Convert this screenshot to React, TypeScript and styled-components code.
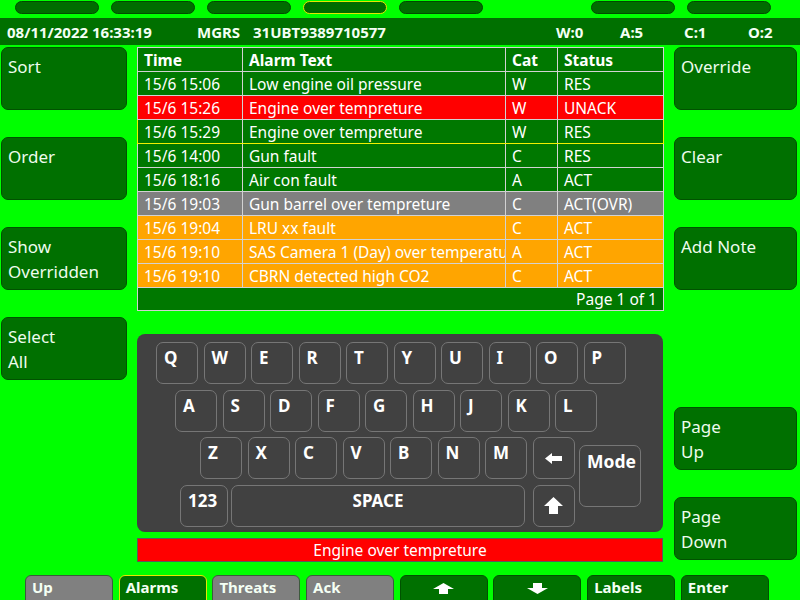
import React from 'react';
import styled, { createGlobalStyle } from 'styled-components';

const GlobalStyle = createGlobalStyle`
  html, body {
    margin: 0;
    padding: 0;
    background: #00ff00;
  }
  body {
    font-family: "Noto Sans", "Open Sans", sans-serif;
    width: 800px;
    height: 600px;
    overflow: hidden;
  }
`;

const Screen = styled.div`
  width: 800px;
  height: 600px;
  overflow: hidden;
  display: flex;
  flex-direction: column;
  & > * {
    flex: none;
  }
`;

const TopTabs = styled.div`
  display: flex;
  gap: 12px;
  padding: 1px 0 0 15px;
  height: 14px;
`;

const TopTab = styled.div<{ $active?: boolean; $empty?: boolean }>`
  width: 84px;
  height: 13px;
  box-sizing: border-box;
  border-radius: 7px;
  background: #006c00;
  border: 1px solid ${(p) => (p.$active ? '#e6e600' : '#004a00')};
  visibility: ${(p) => (p.$empty ? 'hidden' : 'visible')};
`;

const StatusBar = styled.div`
  margin-top: 3px;
  height: 27px;
  background: #007000;
  display: flex;
  align-items: center;
  padding-left: 7px;
  color: #f4fff4;
  font-weight: 700;
  font-size: 15px;
  white-space: nowrap;
  overflow: hidden;
`;

const StatusField = styled.span<{ $w?: number }>`
  width: ${(p) => (p.$w ? `${p.$w}px` : 'auto')};
  flex: ${(p) => (p.$w ? 'none' : '1')};
`;

const Main = styled.div`
  margin-top: 2px;
  height: 528px;
  display: grid;
  grid-template-columns: 126px 526px 124px;
  column-gap: 10px;
  padding-left: 1px;
  box-sizing: border-box;
`;

const SideColumn = styled.div<{ $shift?: number }>`
  display: flex;
  flex-direction: column;
  gap: 27px;
  margin-left: ${(p) => p.$shift ?? 0}px;
`;

const SideButton = styled.div<{ $empty?: boolean }>`
  height: 63px;
  flex: none;
  box-sizing: border-box;
  background: #007000;
  border: 1px solid #005200;
  border-radius: 7px;
  color: #eefcee;
  font-size: 17px;
  line-height: 25px;
  padding: 6px 6px;
  visibility: ${(p) => (p.$empty ? 'hidden' : 'visible')};
`;

const Center = styled.div`
  display: flex;
  flex-direction: column;
  & > * {
    flex: none;
  }
`;

const AlarmTable = styled.table`
  width: 526px;
  table-layout: fixed;
  border-collapse: collapse;
  color: #ffffff;
  font-size: 15.5px;
`;

const HeadCell = styled.th`
  text-align: left;
  font-weight: 700;
  background: #007800;
  border: 1px solid #d2d2d2;
  padding: 0 6px;
  height: 23px;
`;

const rowColors: Record<string, string> = {
  green: '#007800',
  red: '#ff0000',
  grey: '#808080',
  orange: '#ffa500',
};

const Row = styled.tr<{ $tone: string; $focus?: boolean }>`
  background: ${(p) => rowColors[p.$tone]};
  td {
    border-top-color: ${(p) => (p.$focus ? '#f0f000' : '#d2d2d2')};
    border-bottom-color: ${(p) => (p.$focus ? '#f0f000' : '#d2d2d2')};
  }
  td:first-child {
    border-left-color: ${(p) => (p.$focus ? '#f0f000' : '#d2d2d2')};
  }
  td:last-child {
    border-right-color: ${(p) => (p.$focus ? '#f0f000' : '#d2d2d2')};
  }
`;

const Cell = styled.td`
  border: 1px solid #d2d2d2;
  padding: 0 6px;
  height: 23px;
  white-space: nowrap;
  overflow: hidden;
  text-overflow: clip;
`;

const FooterCell = styled.td`
  border: 1px solid #d2d2d2;
  background: #007800;
  text-align: right;
  padding: 0 6px;
  height: 22px;
`;

const Keyboard = styled.div`
  margin-top: 23px;
  height: 198px;
  box-sizing: border-box;
  background: #414141;
  border-radius: 8px;
  padding: 8px 0 0 19px;
`;

const KeyRow = styled.div<{ $indent?: number }>`
  display: flex;
  gap: 5.5px;
  margin-left: ${(p) => p.$indent ?? 0}px;
  margin-bottom: 5.5px;
`;

const Key = styled.div<{ $w?: number; $h?: number; $center?: boolean }>`
  width: ${(p) => p.$w ?? 42}px;
  height: ${(p) => p.$h ?? 42}px;
  flex: none;
  box-sizing: border-box;
  border: 1.5px solid #767676;
  border-radius: 7px;
  color: #ffffff;
  font-weight: 700;
  font-size: 17px;
  line-height: 20px;
  padding: 5px 0 0 7px;
  text-align: ${(p) => (p.$center ? 'center' : 'left')};
  ${(p) => p.$center && 'padding-left: 0;'}
`;

const IconKey = styled(Key)`
  display: flex;
  align-items: center;
  justify-content: center;
  padding: 0;
`;

const LowerKeys = styled.div`
  display: flex;
  margin-left: 24px;
`;

const LowerRows = styled.div`
  display: flex;
  flex-direction: column;
`;

const ModeKey = styled(Key)`
  margin: 8px 0 0 4.5px;
  font-size: 17.5px;
  padding-top: 5px;
`;

const MessageBar = styled.div`
  margin-top: 6px;
  height: 24px;
  box-sizing: border-box;
  background: #ff0000;
  border: 1px solid #5a5a5a;
  color: #ffffff;
  font-size: 15.5px;
  line-height: 22px;
  text-align: center;
`;

const BottomBar = styled.div`
  display: flex;
  gap: 5.7px;
  padding-left: 25px;
`;

const BottomButton = styled.div<{ $tone: 'grey' | 'green'; $active?: boolean }>`
  width: 88px;
  height: 32px;
  flex: none;
  box-sizing: border-box;
  border-radius: 6px;
  background: ${(p) => (p.$tone === 'grey' ? '#808080' : '#007000')};
  border: 1px solid ${(p) => (p.$active ? '#e6e600' : p.$tone === 'grey' ? '#3c5a3c' : '#005200')};
  color: #f4fff4;
  font-weight: 700;
  font-size: 15px;
  line-height: 20px;
  padding: 1px 6px;
`;

const ArrowButton = styled(BottomButton)`
  display: flex;
  justify-content: center;
  padding: 7px 0 0;
`;

const alarms = [
  { time: '15/6 15:06', text: 'Low engine oil pressure', cat: 'W', status: 'RES', tone: 'green' },
  { time: '15/6 15:26', text: 'Engine over tempreture', cat: 'W', status: 'UNACK', tone: 'red' },
  { time: '15/6 15:29', text: 'Engine over tempreture', cat: 'W', status: 'RES', tone: 'green', focus: true },
  { time: '15/6 14:00', text: 'Gun fault', cat: 'C', status: 'RES', tone: 'green' },
  { time: '15/6 18:16', text: 'Air con fault', cat: 'A', status: 'ACT', tone: 'green' },
  { time: '15/6 19:03', text: 'Gun barrel over tempreture', cat: 'C', status: 'ACT(OVR)', tone: 'grey' },
  { time: '15/6 19:04', text: 'LRU xx fault', cat: 'C', status: 'ACT', tone: 'orange' },
  { time: '15/6 19:10', text: 'SAS Camera 1 (Day) over temperature', cat: 'A', status: 'ACT', tone: 'orange' },
  { time: '15/6 19:10', text: 'CBRN detected high CO2', cat: 'C', status: 'ACT', tone: 'orange' },
];

const LeftArrow = () => (
  <svg width="17" height="11" viewBox="0 0 17 11">
    <polygon points="0,5.5 7,0 7,3 17,3 17,8 7,8 7,11" fill="#fff" />
  </svg>
);

const ShiftArrow = () => (
  <svg width="19" height="17" viewBox="0 0 19 17">
    <polygon points="9.5,0 19,9 14,9 14,17 5,17 5,9 0,9" fill="#fff" />
  </svg>
);

const BarArrow = ({ down }: { down?: boolean }) => (
  <svg width="21" height="11" viewBox="0 0 21 11" style={down ? { transform: 'scaleY(-1)' } : undefined}>
    <polygon points="10.5,0 21,6 15,6 15,11 6,11 6,6 0,6" fill="#fff" />
  </svg>
);

const App = () => {
  return (
    <Screen>
      <GlobalStyle />
      <TopTabs>
        <TopTab />
        <TopTab />
        <TopTab />
        <TopTab $active />
        <TopTab />
        <TopTab $empty />
        <TopTab />
        <TopTab />
      </TopTabs>

      <StatusBar>
        <StatusField $w={190}>08/11/2022 16:33:19</StatusField>
        <StatusField $w={56}>MGRS</StatusField>
        <StatusField>31UBT9389710577</StatusField>
        <StatusField $w={64}>W:0</StatusField>
        <StatusField $w={64}>A:5</StatusField>
        <StatusField $w={64}>C:1</StatusField>
        <StatusField $w={52}>O:2</StatusField>
      </StatusBar>

      <Main>
        <SideColumn>
          <SideButton>Sort</SideButton>
          <SideButton>Order</SideButton>
          <SideButton>
            Show
            <br />
            Overridden
          </SideButton>
          <SideButton>
            Select
            <br />
            All
          </SideButton>
        </SideColumn>

        <Center>
          <AlarmTable>
            <colgroup>
              <col style={{ width: 105 }} />
              <col style={{ width: 263 }} />
              <col style={{ width: 52 }} />
              <col style={{ width: 106 }} />
            </colgroup>
            <thead>
              <tr>
                <HeadCell>Time</HeadCell>
                <HeadCell>Alarm Text</HeadCell>
                <HeadCell>Cat</HeadCell>
                <HeadCell>Status</HeadCell>
              </tr>
            </thead>
            <tbody>
              {alarms.map((a, i) => (
                <Row key={i} $tone={a.tone} $focus={a.focus}>
                  <Cell>{a.time}</Cell>
                  <Cell>{a.text}</Cell>
                  <Cell>{a.cat}</Cell>
                  <Cell>{a.status}</Cell>
                </Row>
              ))}
              <tr>
                <FooterCell colSpan={4}>Page 1 of 1</FooterCell>
              </tr>
            </tbody>
          </AlarmTable>

          <Keyboard>
            <KeyRow>
              {'QWERTYUIOP'.split('').map((k) => (
                <Key key={k}>{k}</Key>
              ))}
            </KeyRow>
            <KeyRow $indent={19}>
              {'ASDFGHJKL'.split('').map((k) => (
                <Key key={k}>{k}</Key>
              ))}
            </KeyRow>
            <LowerKeys>
              <LowerRows>
                <KeyRow $indent={20}>
                  {'ZXCVBNM'.split('').map((k) => (
                    <Key key={k}>{k}</Key>
                  ))}
                  <IconKey>
                    <LeftArrow />
                  </IconKey>
                </KeyRow>
                <KeyRow>
                  <Key $w={48}>123</Key>
                  <Key $w={294} $center style={{ marginLeft: -2.5 }}>
                    SPACE
                  </Key>
                  <IconKey style={{ marginLeft: 2 }}>
                    <ShiftArrow />
                  </IconKey>
                </KeyRow>
              </LowerRows>
              <ModeKey $w={62} $h={62}>
                Mode
              </ModeKey>
            </LowerKeys>
          </Keyboard>

          <MessageBar>Engine over tempreture</MessageBar>
        </Center>

        <SideColumn $shift={1}>
          <SideButton>Override</SideButton>
          <SideButton>Clear</SideButton>
          <SideButton>Add Note</SideButton>
          <SideButton $empty />
          <SideButton>
            Page
            <br />
            Up
          </SideButton>
          <SideButton>
            Page
            <br />
            Down
          </SideButton>
        </SideColumn>
      </Main>

      <BottomBar>
        <BottomButton $tone="grey">Up</BottomButton>
        <BottomButton $tone="green" $active>
          Alarms
        </BottomButton>
        <BottomButton $tone="grey">Threats</BottomButton>
        <BottomButton $tone="grey">Ack</BottomButton>
        <ArrowButton $tone="green">
          <BarArrow />
        </ArrowButton>
        <ArrowButton $tone="green">
          <BarArrow down />
        </ArrowButton>
        <BottomButton $tone="green">Labels</BottomButton>
        <BottomButton $tone="green">Enter</BottomButton>
      </BottomBar>
    </Screen>
  );
};

export default App;
